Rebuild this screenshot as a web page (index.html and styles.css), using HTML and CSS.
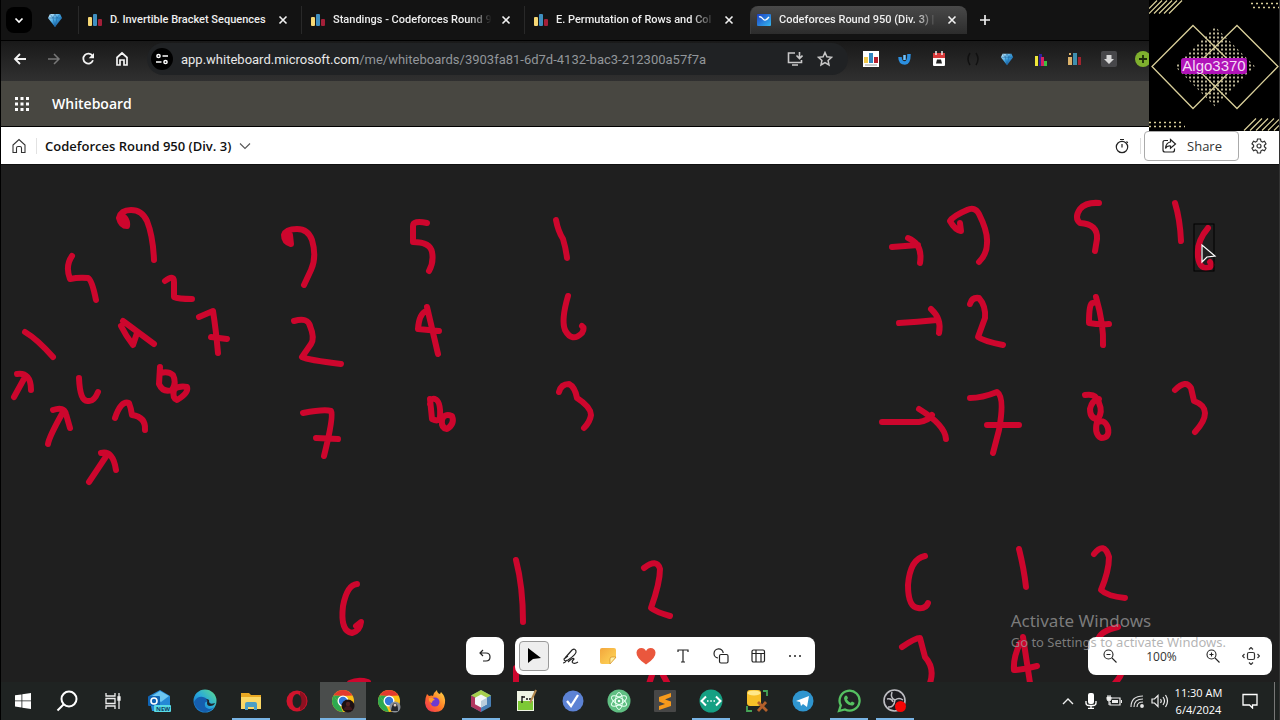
FILE: index.html
```html
<!DOCTYPE html>
<html lang="en">
<head>
    <meta charset="UTF-8">
    <meta name="viewport" content="width=device-width, initial-scale=1.0">
    <title>Codeforces Round 950 (Div. 3) | Whiteboard</title>
    <link rel="stylesheet" href="styles.css">
</head>
<body>
    <!-- shared icons -->
    <svg class="defs" width="0" height="0">
        <defs>
            <linearGradient id="gemFill" x1="0" y1="0" x2="1" y2="1">
                <stop offset="0" stop-color="#d8f4ff"/><stop offset=".5" stop-color="#3b9fdc"/><stop offset="1" stop-color="#0d3f80"/>
            </linearGradient>
            <linearGradient id="boardFill" x1="0" y1="0" x2="1" y2="1">
                <stop offset="0" stop-color="#1b3fc4"/><stop offset="1" stop-color="#35b7ee"/>
            </linearGradient>
            <linearGradient id="noteFill" x1="0" y1="0" x2="1" y2="1">
                <stop offset="0" stop-color="#f3a63c"/><stop offset="1" stop-color="#ffd95a"/>
            </linearGradient>
            <linearGradient id="edgeFill" x1="0" y1="1" x2="1" y2="0">
                <stop offset="0" stop-color="#1267c4"/><stop offset=".5" stop-color="#28a8dc"/><stop offset="1" stop-color="#5fe08a"/>
            </linearGradient>
            <linearGradient id="foxFill" x1="0" y1="1" x2="1" y2="0">
                <stop offset="0" stop-color="#f0295a"/><stop offset=".5" stop-color="#ff7a25"/><stop offset="1" stop-color="#ffe04a"/>
            </linearGradient>
            <pattern id="dots" width="4" height="4" patternUnits="userSpaceOnUse">
                <rect width="2" height="2" fill="#b9b294"/>
            </pattern>
        </defs>
        <symbol id="bars" viewBox="0 0 16 16">
            <rect x="1" y="5" width="4" height="9" rx="1" fill="#f6d774"/>
            <rect x="6" y="2" width="4" height="12" rx="1" fill="#3f8fc0"/>
            <rect x="11" y="7" width="4" height="7" rx="1" fill="#a31f38"/>
        </symbol>
        <symbol id="gem" viewBox="0 0 16 16">
            <path d="M3 2h10l2 4-7 9-7-9z" fill="url(#gemFill)"/>
            <path d="M3 2l3 4 2-4 2 4 3-4M1 6h14M6 6l2 9 2-9" fill="none" stroke="#1a5c98" stroke-width=".5"/>
        </symbol>
        <symbol id="close" viewBox="0 0 14 14">
            <path d="M3.500 3.500l7 7M10.500 3.500l-7 7" stroke="#f1f1f1" stroke-width="1.600"/>
        </symbol>
        <symbol id="chrome" viewBox="0 0 24 24">
            <circle cx="12" cy="12" r="11" fill="#fbc116"/>
            <path d="M2.500 6.500A11 11 0 0 1 21.500 6.500L12 7z" fill="#e33b2e"/>
            <path d="M2.500 6.500L8 14l4 9A11 11 0 0 1 2.500 6.500z" fill="#2da94f"/>
            <path d="M2.500 6.500L12 7 8 14z" fill="#2da94f"/>
            <circle cx="12" cy="12" r="5.500" fill="#fff"/>
            <circle cx="12" cy="12" r="4.200" fill="#3277d8"/>
        </symbol>
    </svg>

    <div class="desktop">
        <header class="tab-strip">
            <button class="tab-search" aria-label="Search tabs"><svg width="12" height="12" viewBox="0 0 12 12"><path d="M2.500 4.500L6 8l3.500-3.500" fill="none" stroke="#fff" stroke-width="1.700"/></svg></button>
            <div class="pinned"><svg width="16" height="16"><use href="#gem"/></svg></div>
            <div class="tab">
                <svg width="16" height="16"><use href="#bars"/></svg>
                <span class="tab-title">D. Invertible Bracket Sequences</span>
                <button aria-label="Close"><svg width="14" height="14"><use href="#close"/></svg></button>
            </div>
            <div class="tab">
                <svg width="16" height="16"><use href="#bars"/></svg>
                <span class="tab-title fade">Standings - Codeforces Round 9</span>
                <button aria-label="Close"><svg width="14" height="14"><use href="#close"/></svg></button>
            </div>
            <div class="tab">
                <svg width="16" height="16"><use href="#bars"/></svg>
                <span class="tab-title fade">E. Permutation of Rows and Col</span>
                <button aria-label="Close"><svg width="14" height="14"><use href="#close"/></svg></button>
            </div>
            <div class="tab active">
                <svg width="16" height="16" viewBox="0 0 16 16"><rect x="1" y="2" width="14" height="12" rx="1" fill="url(#boardFill)"/><path d="M3 5q2-1 4 2t6-2" fill="none" stroke="#fff" stroke-width="1.300"/></svg>
                <span class="tab-title fade">Codeforces Round 950 (Div. 3) |</span>
                <button aria-label="Close"><svg width="14" height="14"><use href="#close"/></svg></button>
            </div>
            <button class="new-tab" aria-label="New tab"><svg width="12" height="12" viewBox="0 0 12 12"><path d="M6 1v10M1 6h10" stroke="#eee" stroke-width="1.700"/></svg></button>
        </header>

        <nav class="browser-bar">
            <button class="nav-btn" aria-label="Back"><svg width="14" height="14" viewBox="0 0 14 14"><path d="M13 7H2M7 2L2 7l5 5" fill="none" stroke="#f4f4f4" stroke-width="1.800"/></svg></button>
            <button class="nav-btn" aria-label="Forward"><svg width="14" height="14" viewBox="0 0 14 14"><path d="M1 7h11M7 2l5 5-5 5" fill="none" stroke="#777" stroke-width="1.500"/></svg></button>
            <button class="nav-btn" aria-label="Reload"><svg width="14" height="14" viewBox="0 0 14 14"><path d="M11.500 3.800A5 5 0 1 0 12 8.300" fill="none" stroke="#f4f4f4" stroke-width="1.800"/><path d="M13 1v5.300H7.700z" fill="#f4f4f4"/></svg></button>
            <button class="nav-btn" aria-label="Home"><svg width="14" height="16" viewBox="0 0 14 16"><path d="M2 14V6.500L7 2l5 4.500V14H9V9H5v5z" fill="none" stroke="#f4f4f4" stroke-width="1.700"/></svg></button>
            <div class="address">
                <button class="site-info" aria-label="Site information"><svg width="14" height="12" viewBox="0 0 14 12" fill="none" stroke="#fff" stroke-width="1.500"><circle cx="3.500" cy="3" r="1.600"/><path d="M7.500 3H13M1 9h5.500"/><circle cx="10.500" cy="9" r="1.600"/></svg></button>
                <span class="url">app.whiteboard.microsoft.com<span>/me/whiteboards/3903fa81-6d7d-4132-bac3-212300a57f7a</span></span>
                <button aria-label="Install"><svg width="16" height="16" viewBox="0 0 16 16" fill="none" stroke="#c8c8c8" stroke-width="1.600"><path d="M8 2H1.500v9.500h13V9M5 14h6M12.500 1v6M9.500 4.500l3 3 3-3"/></svg></button>
                <button aria-label="Bookmark"><svg width="16" height="16" viewBox="0 0 16 16"><path d="M8 1.500l1.900 4.300 4.600.5-3.400 3.100.9 4.600L8 11.600 4 14l.9-4.600-3.400-3.100 4.600-.5z" fill="none" stroke="#c8c8c8" stroke-width="1.500"/></svg></button>
            </div>
            <div class="extensions">
                <button aria-label="Extension 1"><svg width="16" height="16" viewBox="0 0 16 16"><rect width="16" height="16" fill="#fff"/><rect x="1" y="6" width="4" height="6" fill="#f0c84a"/><rect x="6" y="2" width="4" height="10" fill="#2f86c0"/><rect x="11" y="6" width="4" height="6" fill="#b81f2e"/><path d="M2 14h12" stroke="#999"/></svg></button>
                <button aria-label="Extension 2"><svg width="16" height="16" viewBox="0 0 16 16"><path d="M3 6q0 6 5 6 4 0 4-9" fill="none" stroke="#2b8fe0" stroke-width="3.500"/><path d="M7.500 4v5" stroke="#72c4ff" stroke-width="2.500"/></svg></button>
                <button aria-label="Extension 3"><svg width="16" height="16" viewBox="0 0 16 16"><rect x="2" y="2" width="12" height="13" rx="1" fill="#fff"/><rect x="2" y="2" width="12" height="5" fill="#d93a3a"/><path d="M5 0v4M11 0v4" stroke="#eee" stroke-width="1.500"/><path d="M5 12.500h6l-1-4H6z" fill="#222"/></svg></button>
                <button aria-label="Extension 4"><svg width="16" height="16" viewBox="0 0 16 16"><path d="M5 2Q1 8 5 14M11 2q4 6 0 12" fill="none" stroke="#111" stroke-width="1.500"/></svg></button>
                <button aria-label="Extension 5"><svg width="14" height="14"><use href="#gem"/></svg></button>
                <button aria-label="Extension 6"><svg width="16" height="16" viewBox="0 0 16 16"><rect x="2" y="5" width="3" height="10" fill="#efe73a"/><rect x="6" y="3" width="3" height="12" fill="#3321a0"/><rect x="8" y="6" width="3" height="9" fill="#d82360"/><rect x="11" y="10" width="3" height="5" fill="#40c040"/></svg></button>
                <button aria-label="Extension 7"><svg width="16" height="16" viewBox="0 0 16 16"><rect x="1" y="6" width="4" height="8" fill="#dcb26a"/><rect x="2" y="2" width="2" height="2" fill="#dcb26a"/><rect x="6" y="2" width="4" height="12" fill="#3f8fae"/><rect x="11" y="6" width="3" height="8" fill="#a3232e"/></svg></button>
                <button aria-label="Extension 8"><svg width="16" height="16" viewBox="0 0 16 16"><rect width="16" height="16" rx="2" fill="#47474a"/><path d="M5.500 4h5v4H13l-5 5-5-5h2.500z" fill="#d8d8d8"/></svg></button>
                <button aria-label="Extension 9"><svg width="16" height="16" viewBox="0 0 16 16"><circle cx="8" cy="8" r="8" fill="#7fb02e"/><path d="M8 4v8M4 8h8" stroke="#1d2a0a" stroke-width="1.800"/></svg></button>
            </div>
        </nav>

        <div class="app-bar">
            <button aria-label="App launcher"><svg width="16" height="16" viewBox="0 0 16 16" fill="#fff"><path d="M1 1h3v3H1zM6.500 1h3v3h-3zM12 1h3v3h-3zM1 6.500h3v3H1zM6.500 6.500h3v3h-3zM12 6.500h3v3h-3zM1 12h3v3H1zM6.500 12h3v3h-3zM12 12h3v3h-3z"/></svg></button>
            <h1>Whiteboard</h1>
        </div>

        <div class="board-bar">
            <button class="home" aria-label="Home"><svg width="16" height="16" viewBox="0 0 16 16"><path d="M2 14.500V7l6-5.500L14 7v7.500h-3.500V10q0-1.500-1.500-1.500H7Q5.500 8.500 5.500 10v4.500z" fill="none" stroke="#333" stroke-width="1.100"/></svg></button>
            <button class="board-name">Codeforces Round 950 (Div. 3) <svg width="12" height="8" viewBox="0 0 12 8"><path d="M1 1.500l5 5 5-5" fill="none" stroke="#555" stroke-width="1.100"/></svg></button>
            <div class="board-actions">
                <button class="timer" aria-label="Timer"><svg width="16" height="16" viewBox="0 0 16 16" fill="none" stroke="#222" stroke-width="1.200"><circle cx="8" cy="9" r="5.700"/><path d="M8 6v3.500M6 1.500h4M12.500 3.500l1.300 1.300"/></svg></button>
                <button class="share"><svg width="16" height="16" viewBox="0 0 16 16" fill="none" stroke="#222" stroke-width="1.200"><path d="M7 2.500H4Q2 2.500 2 4.500V12q0 2 2 2h7.500q2 0 2-2v-1.500M9.500 1.500L14.500 6l-5 4.300V8Q6 7.500 4.500 10.500 5 4.500 9.500 4z"/></svg>Share</button>
                <button class="settings" aria-label="Settings"><svg width="16" height="16" viewBox="0 0 16 16" fill="none" stroke="#333" stroke-width="1.200"><path d="M6.500 1h3l.5 2.200 1.500.8 2-.7 1.500 2.500L13.400 7.200v1.600l1.600 1.400-1.500 2.500-2-.7-1.500.8-.5 2.200h-3L6 12.800l-1.500-.8-2 .7L1 10.200l1.600-1.400V7.200L1 5.800l1.500-2.500 2 .7L6 3.200z"/><circle cx="8" cy="8" r="2"/></svg></button>
            </div>
        </div>

        <main class="canvas">
            <svg class="ink" viewBox="1 165 1278 517" preserveAspectRatio="xMinYMin slice">
                <g class="stroke">
                    <!-- rotated grid -->
                    <path d="M125 220L127 226Q121 226 119 218Q121 210 131 210Q142 210 147 221Q153 236 154 260M127 226Q128 220 123 216"/>
                    <path d="M72 256Q65 266 70 279Q79 277 88 278Q92 280 96 300"/>
                    <path d="M165 281Q174 274 174 282L174 297Q178 299 192 299"/>
                    <path d="M199 317L213 311Q216 330 218 353M211 337L227 339"/>
                    <path d="M123 321L154 344M121 326Q126 336 133 345L137 333"/>
                    <path d="M25 332Q37 339 53 357"/>
                    <path d="M14 397L25 377M17 374Q31 372 31 390"/>
                    <path d="M79 378Q80 402 88 401Q94 402 98 392"/>
                    <path d="M160 367L159 384Q163 393 172 390Q177 383 173 375Q168 371 161 373M172 390Q180 385 187 387Q189 393 177 400Q172 398 174 390"/>
                    <path d="M115 418Q121 400 129 403Q131 408 132 415Q146 417 145 430"/>
                    <path d="M48 444Q49 437 63 412M53 410Q64 406 66 414L70 428"/>
                    <path d="M89 482L107 455M101 453Q113 450 116 470"/>
                    <!-- source matrix -->
                    <path d="M290 235L291 244Q284 242 284 235Q286 229 297 229Q308 229 312 240Q317 257 311 270L304 285"/>
                    <path d="M427 223Q413 220 413 226L413 242Q430 242 432 252Q434 262 429 271"/>
                    <path d="M556 220Q558 231 563 239Q566 249 567 258"/>
                    <path d="M294 321Q308 317 310 326Q315 338 311 344L302 357Q308 360 341 364"/>
                    <path d="M427 307L438 354M426 311Q419 314 418 329L439 331"/>
                    <path d="M568 296Q561 320 565 330Q572 343 582 333Q585 328 582 326"/>
                    <path d="M303 413Q324 409 331 411Q334 416 324 456M316 438L338 439"/>
                    <path d="M430 399L432 419Q438 422 440 418Q441 401 435 399Q430 398 430 404M442 420Q441 428 447 429Q455 424 452 416Q444 413 442 420"/>
                    <path d="M559 392Q561 384 569 384Q575 387 577 398Q591 407 591 415Q590 422 584 428"/>
                </g>
                <!-- shifted matrix -->
                <g class="stroke" transform="translate(2 0)">
                    <path d="M890 247L916 245M906 238Q921 244 918 263"/>
                    <path d="M958 223L959 231Q953 230 948 221Q951 216 965 210Q973 206 977 214Q986 232 985 243Q985 254 977 262"/>
                    <path d="M1097 203Q1084 202 1078 209Q1072 218 1078 223Q1096 224 1095 239L1093 251"/>
                    <path d="M1173 203Q1178 219 1179 241"/>
                    <path d="M1206 228Q1194 242 1196 257Q1198 271 1208 267Q1211 265 1208 262"/>
                    <path d="M897 323Q915 322 935 320M929 309Q940 319 937 333"/>
                    <path d="M968 304Q970 297 977 298Q984 306 983 318L976 337Q981 341 1001 345"/>
                    <path d="M1094 297Q1102 325 1101 345M1091 303Q1087 302 1087 323Q1098 325 1107 324"/>
                    <path d="M880 422H917Q926 421 930 415M917 409Q943 425 944 439"/>
                    <path d="M968 398Q980 398 995 392Q1003 397 997 430L991 453M985 425H1017"/>
                    <path d="M1083 395Q1095 393 1097 403Q1101 412 1096 419Q1088 419 1088 409Q1090 400 1097 399M1095 422Q1092 434 1099 438Q1108 438 1106 428Q1103 419 1096 422"/>
                    <path d="M1173 390Q1184 379 1189 388L1192 401Q1203 405 1203 413Q1203 421 1193 432"/>
                </g>
                <!-- lower rows -->
                <g class="stroke">
                    <path d="M357 584Q347 585 343 606Q340 631 352 633Q360 631 361 622L356 626"/>
                    <path d="M516 560Q523 587 523 622"/>
                    <path d="M644 568Q657 558 660 569Q660 583 651 608Q656 612 670 616"/>
                    <path d="M350 683Q358 679 368 682"/>
                    <path d="M516 668V684M652 675L649 684M663 675L668 684"/>
                    <path d="M925 556Q910 559 908 585Q908 607 918 608Q926 609 928 603"/>
                    <path d="M1019 549Q1024 569 1026 587"/>
                    <path d="M1094 554Q1104 541 1109 557Q1109 571 1101 590Q1107 596 1125 598"/>
                    <path d="M902 647Q915 638 920 638L925 657Q935 668 930 683"/>
                    <path d="M1023 637L1030 683M1020 643Q1013 658 1014 670Q1021 670 1037 666"/>
                    <path d="M1118 627Q1100 631 1098 640V668Q1117 664 1122 672Q1120 678 1115 683"/>
                </g>
                <rect class="selection" x="1194" y="224" width="20" height="47"/>
                <path class="cursor" d="M1202 245v17l5-5 8-1z"/>
            </svg>

            <div class="dock">
                <button class="undo" aria-label="Undo"><svg width="14" height="14" viewBox="0 0 14 14"><path d="M5 1L2 4l3 3M2 4h6q4 0 4 4t-4 4H5" fill="none" stroke="#222" stroke-width="1.200"/></svg></button>
                <div class="tools">
                    <button class="selected" aria-label="Select"><svg width="16" height="18" viewBox="0 0 16 18"><path d="M2 1v15l5-4 8-1z" fill="#000"/></svg></button>
                    <button aria-label="Ink"><svg width="18" height="18" viewBox="0 0 18 18" fill="none" stroke="#222" stroke-width="1.200"><path d="M3 11L10 3q3-2 4 1t-8 9q-4 2-4-1l4-3M1 16q2 0 4-3M6 15q5-5 6-3-3 3-1 4t5-1"/></svg></button>
                    <button aria-label="Notes"><svg width="18" height="18" viewBox="0 0 18 18"><path d="M3 1h12q2 0 2 2v8l-6 6H3q-2 0-2-2V3q0-2 2-2z" fill="url(#noteFill)"/><path d="M17 10l-6 7v-5q0-2 2-2z" fill="#fff0a6" stroke="#c98220" stroke-width=".6"/></svg></button>
                    <button aria-label="Reactions"><svg width="20" height="18" viewBox="0 0 20 18"><path d="M10 17.500Q0 11 .5 5.500 1 1 5.500 1 8.500 1 10 4q1.500-3 4.500-3Q19 1 19.500 5.500 20 11 10 17.500z" fill="#ea573d"/></svg></button>
                    <button aria-label="Text"><svg width="14" height="16" viewBox="0 0 14 16"><path d="M2 4V2h10v2M7 2v12M5 14h4" fill="none" stroke="#222" stroke-width="1.200"/></svg></button>
                    <button aria-label="Shapes"><svg width="16" height="16" viewBox="0 0 16 16" fill="none" stroke="#222" stroke-width="1.200"><path d="M5 10A4.600 4.600 0 1 1 10.200 5"/><rect x="6.500" y="6.500" width="8.500" height="8.500" rx="1.500"/></svg></button>
                    <button aria-label="Templates"><svg width="16" height="16" viewBox="0 0 16 16" fill="none" stroke="#222" stroke-width="1.200"><rect x="2" y="2" width="12.500" height="12" rx="1.500"/><path d="M6 2v12M2 5.500h12.500M11 5.500v8.500"/></svg></button>
                    <button aria-label="More"><svg width="14" height="4" viewBox="0 0 14 4" fill="#222"><circle cx="2" cy="2" r="1"/><circle cx="7" cy="2" r="1"/><circle cx="12" cy="2" r="1"/></svg></button>
                </div>
            </div>

            <div class="zoom">
                <button aria-label="Zoom out"><svg width="14" height="14" viewBox="0 0 14 14" fill="none" stroke="#222" stroke-width="1.100"><circle cx="5.500" cy="5.500" r="4.500"/><path d="M9 9l4.500 4.500M3.500 5.500h4"/></svg></button>
                <span>100%</span>
                <button aria-label="Zoom in"><svg width="14" height="14" viewBox="0 0 14 14" fill="none" stroke="#222" stroke-width="1.100"><circle cx="5.500" cy="5.500" r="4.500"/><path d="M9 9l4.500 4.500M3.500 5.500h4M5.500 3.500v4"/></svg></button>
                <button class="fit" aria-label="Fit to screen"><svg width="18" height="18" viewBox="0 0 18 18" fill="none" stroke="#333" stroke-width="1.200"><rect x="5.500" y="5.500" width="7" height="7" rx="1.500"/><path d="M7 2.500l2-2 2 2M7 15.500l2 2 2-2M2.500 7l-2 2 2 2M15.500 7l2 2-2 2"/></svg></button>
            </div>

            <div class="watermark">
                <p class="watermark-title">Activate Windows</p>
                <p>Go to Settings to activate Windows.</p>
            </div>
        </main>

        <footer class="taskbar">
            <button class="start" aria-label="Start"><svg width="16" height="16" viewBox="0 0 16 16" fill="#fff"><path d="M0 2.300l6.500-.9v6.100H0zM7.300 1.300L16 0v7.500H7.300zM0 8.300h6.500v6.200L0 13.600zM7.300 8.300H16V16l-8.700-1.300z"/></svg></button>
            <button aria-label="Search"><svg width="22" height="22" viewBox="0 0 22 22" fill="none" stroke="#fff" stroke-width="2"><circle cx="13" cy="9" r="7.500"/><path d="M7.500 14.500L1.500 20.500"/></svg></button>
            <button aria-label="Task view"><svg width="18" height="18" viewBox="0 0 18 18" fill="none" stroke="#eee" stroke-width="1.300"><path d="M2 1v3h9V1M2 17v-3h9v3M2 6.500h9v5H2zM15 1v16"/><path d="M14 5h2v3h-2z" fill="#eee"/></svg></button>
            <button aria-label="Outlook"><svg width="24" height="24" viewBox="0 0 24 24"><path d="M2 7l11-6 10 6v15H5z" fill="#2489d6"/><path d="M5 7l8-5 9 5-8 6z" fill="#6cc7f2"/><rect x="1" y="7" width="12" height="10" rx="1" fill="#0f64b4"/><circle cx="7" cy="12" r="3" fill="none" stroke="#fff" stroke-width="1.600"/><rect x="7" y="16" width="17" height="7" rx="1" fill="#59dae5"/><text x="9" y="22" class="new-label">NEW</text></svg></button>
            <button aria-label="Edge"><svg width="24" height="24" viewBox="0 0 24 24"><circle cx="12" cy="12" r="11.500" fill="url(#edgeFill)"/><path d="M1 13Q4 7 10 8q5 1 5 5-2-1-3 1-1 5 4 6 3 0 5-2-5 7-13 4Q2 19 1 13z" fill="#155eae"/><path d="M14 14q1-3-1-4 4 0 3 3 1 3 6 1-1 3-5 3-3 0-3-3z" fill="#20242a"/></svg></button>
            <button class="open" aria-label="File Explorer"><svg width="22" height="20" viewBox="0 0 22 20"><path d="M1 2h8l2 2h10v14H1z" fill="#e9a823"/><path d="M1 6h20v12H1z" fill="#fbd765"/><path d="M5 19v-6q0-2 2-2h8q2 0 2 2v6h-3v-3H8v3z" fill="#4b9ec4"/></svg></button>
            <button aria-label="Opera"><svg width="22" height="22" viewBox="0 0 22 22"><circle cx="11" cy="11" r="10.500" fill="#d0142c"/><path d="M14 1.500q6.500 3 6.500 9.500T14 20.500z" fill="#8d1020"/><ellipse cx="11" cy="11" rx="4.500" ry="7" fill="#202322"/></svg></button>
            <button class="open current" aria-label="Chrome"><svg width="24" height="24" viewBox="0 0 24 24"><use href="#chrome"/><circle cx="17" cy="17" r="6.500" fill="#1d1012"/><circle cx="17" cy="15" r="2.200" fill="#512320"/><path d="M12.500 21q1-4 4.500-4t4.500 4z" fill="#40171b"/></svg></button>
            <button aria-label="Chrome, second profile"><svg width="24" height="24" viewBox="0 0 24 24"><use href="#chrome"/><circle cx="18" cy="18" r="5.500" fill="#8c9199"/><path d="M14 22q1-8 4-8t3 8z" fill="#26282c"/><circle cx="18" cy="16" r="1.500" fill="#e0cdbd"/></svg></button>
            <button aria-label="Firefox"><svg width="22" height="24" viewBox="0 0 22 24"><path d="M3 5l2 2q3-1 4 0 1-4 4-6 0 3 3 4l1-2q5 5 4 11-1 9-10 9T1 14q0-5 2-9z" fill="url(#foxFill)"/><circle cx="11" cy="13" r="4.500" fill="#6d3ad0"/><path d="M5 9q4-1 6 2-3 0-3 3-4-1-3-5z" fill="#ff9a2c"/></svg></button>
            <button class="open" aria-label="NetBeans"><svg width="22" height="24" viewBox="0 0 22 24"><path d="M11 1l10 5.500v11L11 23 1 17.500v-11z" fill="#487fb5"/><path d="M11 1l10 5.500-10 5L1 6.500z" fill="#a6cf4e"/><path d="M1 6.500l10 5V23L1 17.500z" fill="#b0365f"/><path d="M11 5.500l6 3.300v6.500l-6 3.300-6-3.300V8.800z" fill="#f3f7fa"/><path d="M11 12v6.600l6-3.300V8.800z" fill="#b9cddc"/></svg></button>
            <button aria-label="Notepad++"><svg width="22" height="24" viewBox="0 0 22 24"><rect x="1" y="2" width="17" height="20" fill="#eef3e4"/><rect x="2" y="12" width="15" height="9" fill="#7cc935"/><path d="M6 7v7M6 8h3M10 10h2M13 10h2" stroke="#111" stroke-width="1.300"/><path d="M20 1l-6 13" stroke="#b48a50" stroke-width="2"/></svg></button>
            <button aria-label="Tasks"><svg width="22" height="22" viewBox="0 0 22 22"><circle cx="11" cy="11" r="10.500" fill="#5c82d4"/><path d="M5 11l4 5 7-11" fill="none" stroke="#fff" stroke-width="2.300"/></svg></button>
            <button aria-label="Atom"><svg width="24" height="24" viewBox="0 0 24 24"><circle cx="12" cy="12" r="11.500" fill="#60bf83"/><g fill="none" stroke="#e4fff0" stroke-width="1"><ellipse cx="12" cy="12" rx="3.500" ry="8.500"/><ellipse cx="12" cy="12" rx="3.500" ry="8.500" transform="rotate(60 12 12)"/><ellipse cx="12" cy="12" rx="3.500" ry="8.500" transform="rotate(120 12 12)"/></g><circle cx="12" cy="12" r="1.300" fill="#fff"/></svg></button>
            <button aria-label="Sublime Text"><svg width="24" height="24" viewBox="0 0 24 24"><rect x="1" y="1" width="22" height="22" rx="1" fill="#474747"/><path d="M6 8l12-4v4l-6 2.500 6 2V17L6 21v-4l6-2-6-2.500z" fill="#f79a1c"/></svg></button>
            <button class="open" aria-label="Code editor"><svg width="24" height="24" viewBox="0 0 24 24"><circle cx="12" cy="12" r="11.500" fill="#16a083"/><path d="M7 7.500L2.500 12 7 16.500M17 7.500l4.500 4.500-4.500 4.500" fill="none" stroke="#fff" stroke-width="2"/><path d="M8 12h1.500M11.300 12h1.500M14.500 12H16" stroke="#fff" stroke-width="1.500"/></svg></button>
            <button aria-label="Database tools"><svg width="24" height="24" viewBox="0 0 24 24"><rect x="2" y="1" width="14" height="16" rx="3" fill="#f7bf28"/><ellipse cx="9" cy="4" rx="6.500" ry="2.500" fill="#ffe88a"/><path d="M18 2h4v5M2 17v5h5" fill="none" stroke="#46a558" stroke-width="1.800"/><path d="M13 13l9 9M21 13l-8 9" stroke="#b3602b" stroke-width="2.800"/></svg></button>
            <button aria-label="Telegram"><svg width="22" height="22" viewBox="0 0 22 22"><circle cx="11" cy="11" r="10.500" fill="#2f95cf"/><path d="M4 11l13-5-2 11-4-3-2 2-1-4z" fill="#fff"/></svg></button>
            <button class="open" aria-label="WhatsApp"><svg width="24" height="24" viewBox="0 0 24 24"><path d="M2 22l1.800-5.600A10 10 0 1 1 8 20.500z" fill="none" stroke="#55c161" stroke-width="2.300"/><path d="M8 7q1-1 2 0l1 2-1 1.500q1 2 3.500 3.300L15 12.500l2.500 1.200q0 2.800-3 2.800Q8 15.500 7 9.500 7 8 8 7z" fill="#55c161"/></svg></button>
            <button class="open" aria-label="OBS Studio"><svg width="24" height="24" viewBox="0 0 24 24"><circle cx="11.500" cy="11.500" r="10.500" fill="#1c1c20" stroke="#bdbdc2" stroke-width="1.600"/><path d="M9 3q-2 6 3 8M20 11q-4-3-8 0M5 18q6 1 7-7M4 10q5-1 6 3" fill="none" stroke="#bdbdc2" stroke-width="1.500"/><circle cx="17.500" cy="17.500" r="5.500" fill="#f50505"/></svg></button>

            <div class="tray">
                <button aria-label="Show hidden icons"><svg width="12" height="8" viewBox="0 0 12 8"><path d="M1 7l5-5 5 5" fill="none" stroke="#eee" stroke-width="1.400"/></svg></button>
                <button aria-label="Microphone"><svg width="12" height="16" viewBox="0 0 12 16"><rect x="3" y="0" width="6" height="11" rx="2" fill="#fff"/><path d="M1 8v2q0 2.500 3 2.500h4q3 0 3-2.500V8M6 12v3M3 15.300h6" fill="none" stroke="#fff" stroke-width="1.300"/></svg></button>
                <button aria-label="Battery"><svg width="16" height="12" viewBox="0 0 16 12"><path d="M5 3h9v7H4V7" fill="none" stroke="#eee" stroke-width="1.200"/><rect x="6" y="5" width="6" height="3" fill="#eee"/><path d="M15.500 5v3M1 2h4v2q0 2-2 2T1 4zM2 0v2M4 0v2M3 6v4" stroke="#eee" fill="#eee"/></svg></button>
                <button aria-label="Network"><svg width="14" height="14" viewBox="0 0 14 14" fill="none" stroke="#ddd" stroke-width="1.200"><path d="M1 13Q1 2 13 2M4 13q0-8 9-8M7 13q0-5 6-5"/><circle cx="12" cy="12" r="1.300" fill="#fff"/></svg></button>
                <button aria-label="Volume"><svg width="18" height="14" viewBox="0 0 18 14" fill="none" stroke="#eee" stroke-width="1.200"><path d="M1 5h2.500L7 1.500v11L3.500 9H1zM9.500 5q1.500 2 0 4M12 3q3 4 0 8M14.500 1q4 6 0 12"/></svg></button>
                <div class="clock"><time>11:30 AM</time><time>6/4/2024</time></div>
                <button class="notify" aria-label="Notifications"><svg width="16" height="16" viewBox="0 0 16 16"><path d="M1 1.500h14v10.500h-4.500v3L7.500 12H1z" fill="none" stroke="#fff" stroke-width="1.300"/></svg></button>
            </div>
        </footer>

        <!-- channel badge pinned over the window corner -->
        <div class="channel">
            <svg viewBox="0 0 130 130" fill="none" stroke="#d9cf9a">
                <path d="M66 26L106 66L66 106L26 66z" fill="url(#dots)" stroke="none"/>
                <path d="M44 25L86 66L44 108L3 66zM88 25L129 66L88 108L46 66z" stroke-width="1.300"/>
                <path d="M0 8l8-8M0 13L13 0M5 13L18 0M10 13L23 0M15 13L28 0M20 13L33 0M95 130l12-12M101 130l12-12M107 130l12-12M113 130l12-12M119 130l11-11M125 130l5-5" stroke-width="1.200"/>
                <path d="M102 3h28M104 7h26M0 122h32M0 126h36" stroke-dasharray="2 3" stroke-width="1.500"/>
            </svg>
            <span>Algo3370</span>
        </div>
    </div>
</body>
</html>
```
FILE: styles.css
```css
* {
    margin: 0;
    padding: 0;
    box-sizing: border-box;
    font-family: "Open Sans", "Noto Sans", sans-serif;
}

body {
    background: #000;
}

button {
    display: flex;
    align-items: center;
    justify-content: center;
    flex-shrink: 0;
    background: transparent;
    border: none;
    cursor: pointer;
}

svg {
    display: block;
    flex-shrink: 0;
}

.defs {
    position: absolute;
}

.desktop {
    position: relative;
    display: flex;
    flex-direction: column;
    height: 100vh;
    overflow: hidden;
    border-left: 1px solid #000;
    border-right: 1px solid #333;
}

/* browser tabs */
.tab-strip {
    display: flex;
    align-items: center;
    height: 41px;
    padding-left: 5px;
    background: #131313;
    border-bottom: 1px solid #000;
}

.tab-search {
    width: 26px;
    height: 26px;
    background: #000;
    border-radius: 8px;
}

.pinned {
    display: flex;
    justify-content: center;
    width: 46px;
}

.tab {
    display: flex;
    align-items: center;
    gap: 7px;
    flex: 0 1 223px;
    min-width: 0;
    height: 28px;
    padding-left: 8px;
    border-left: 1px solid #292929;
}

.tab.active {
    flex-basis: 217px;
    margin-left: 3px;
    padding-left: 5px;
    background: linear-gradient(#494949, #2c2c2c);
    border-color: #3b3b3b;
    border-radius: 8px 8px 0 0;
}

.tab-title {
    flex: 0 1 159px;
    min-width: 0;
    overflow: hidden;
    white-space: nowrap;
    font-family: Roboto, sans-serif;
    font-size: 11px;
    font-weight: 500;
    line-height: 20px;
    color: #eee;
}

.fade {
    mask-image: linear-gradient(to right, #000 85%, transparent);
}

.new-tab {
    width: 36px;
    height: 28px;
}

/* address row */
.browser-bar {
    display: flex;
    align-items: center;
    height: 40px;
    padding: 0 119px 4px 2px;
    background: linear-gradient(#191919, #303030);
}

.nav-btn {
    width: 34px;
    height: 32px;
}

.address {
    display: flex;
    align-items: center;
    flex: 1;
    min-width: 0;
    height: 32px;
    margin: 0 6px 0 8px;
    padding: 0 8px 0 4px;
    background: #202224;
    border-radius: 16px;
}

.address button {
    width: 30px;
    height: 28px;
}

.address .site-info {
    width: 22px;
    height: 22px;
    background: #000;
    border-radius: 50%;
}

.url {
    flex: 1;
    min-width: 0;
    margin-left: 8px;
    overflow: hidden;
    white-space: nowrap;
    font-family: Roboto, sans-serif;
    font-size: 13px;
    color: #e8e8e8;
}

.url span {
    font-family: inherit;
    color: #92969a;
}

.extensions {
    display: flex;
}

.extensions button {
    width: 34px;
    height: 32px;
}

/* whiteboard app */
.app-bar {
    display: flex;
    align-items: center;
    gap: 16px;
    height: 46px;
    padding-left: 7px;
    background: #484741;
    border-bottom: 1px solid #000;
}

.app-bar button {
    width: 28px;
    height: 28px;
}

.app-bar h1 {
    font-size: 14px;
    font-weight: 600;
    color: #fff;
}

.board-bar {
    display: flex;
    align-items: center;
    height: 38px;
    background: #fff;
    border-bottom: 1px solid #111;
}

.board-bar .home {
    width: 36px;
    height: 16px;
    border-right: 1px solid #e2e2e2;
}

.board-name {
    gap: 8px;
    padding-left: 8px;
    font-size: 13px;
    font-weight: 600;
    color: #111;
}

.board-actions {
    display: flex;
    align-items: center;
    margin-left: auto;
}

.timer {
    width: 38px;
    height: 16px;
    border-right: 1px solid #ddd;
}

.share {
    gap: 10px;
    width: 95px;
    height: 30px;
    margin-left: 3px;
    border: 1px solid #aaa;
    border-radius: 4px;
    font-size: 13px;
    color: #333;
}

.settings {
    width: 40px;
    height: 30px;
}

/* drawing surface */
.canvas {
    position: relative;
    flex: 1;
    min-height: 0;
    overflow: hidden;
    background: #1f1f1f;
}

.ink {
    width: 100%;
    height: 100%;
}

.stroke {
    fill: none;
    stroke: #cd062d;
    stroke-width: 6;
    stroke-linecap: round;
    stroke-linejoin: round;
}

.selection {
    fill: none;
    stroke: #000;
}

.cursor {
    fill: #222;
    stroke: #fff;
    stroke-width: 1.2;
}

.dock {
    position: absolute;
    right: 0;
    bottom: 7px;
    left: 0;
    display: flex;
    justify-content: center;
    gap: 11px;
}

.undo,
.tools,
.zoom {
    height: 38px;
    background: #fff;
    border-radius: 8px;
}

.undo {
    width: 38px;
}

.tools {
    display: flex;
    align-items: center;
    justify-content: space-between;
    width: 300px;
    padding: 0 4px;
}

.tools button {
    width: 30px;
    height: 30px;
}

.tools .selected {
    background: #eee;
    border: 1px solid #999;
    border-radius: 4px;
}

.zoom {
    position: absolute;
    right: 7px;
    bottom: 7px;
    display: flex;
    align-items: center;
    width: 184px;
    padding: 0 5px 0 6px;
    font-size: 12px;
    color: #333;
}

.zoom button {
    width: 32px;
    height: 30px;
}

.zoom span {
    width: 71px;
    text-align: center;
}

.zoom .fit {
    margin-left: auto;
}

.watermark {
    position: absolute;
    right: 53px;
    bottom: 31px;
    font-size: 13px;
    line-height: 18px;
    color: rgba(155, 155, 155, 0.75);
    pointer-events: none;
}

.watermark p {
    font-family: "Noto Sans", sans-serif;
}

.watermark-title {
    font-size: 17px;
    line-height: 24px;
}

/* taskbar */
.taskbar {
    display: flex;
    height: 38px;
    background: #1f2322;
}

.taskbar > button {
    width: 46px;
}

.taskbar .start {
    width: 43px;
}

.open {
    background: linear-gradient(#79b4e4, #79b4e4) center bottom / 38px 2px no-repeat;
}

.current {
    background-color: #4a4d4c;
    background-size: 46px 2px;
}

.new-label {
    font-size: 6px;
    font-weight: 700;
    fill: #0b3f66;
}

.tray {
    display: flex;
    align-items: center;
    margin-left: auto;
    padding-right: 4px;
}

.tray button {
    width: 23px;
    height: 38px;
}

.clock {
    display: flex;
    flex-direction: column;
    align-items: center;
    width: 55px;
    font-size: 11px;
    line-height: 17px;
    color: #fff;
}

.tray .notify {
    width: 49px;
    border-right: 1px solid #777;
}

/* corner badge */
.channel {
    position: absolute;
    top: 0;
    right: 0;
    display: flex;
    align-items: center;
    justify-content: center;
    width: 130px;
    height: 131px;
    background: #000;
}

.channel svg {
    position: absolute;
    width: 100%;
    height: 100%;
}

.channel span {
    position: relative;
    padding: 0 1px;
    background: #b013b8;
    border-radius: 3px;
    font-family: "Liberation Sans", sans-serif;
    font-size: 15px;
    line-height: 16px;
    color: #f6dcf6;
}
```
